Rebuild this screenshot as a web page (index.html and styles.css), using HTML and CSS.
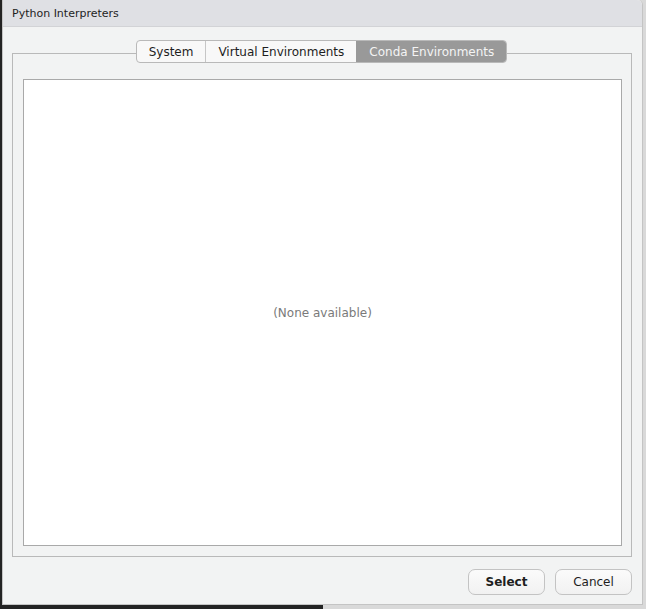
FILE: index.html
```html
<!DOCTYPE html>
<html lang="en">
<head>
    <meta charset="UTF-8">
    <title>Python Interpreters</title>
    <link rel="stylesheet" href="styles.css">
</head>
<body>
    <div class="dialog">
        <div class="titlebar">Python Interpreters</div>
        <div class="dialog-body">
            <div class="panel">
                <div class="tabs">
                    <button class="tab">System</button>
                    <button class="tab">Virtual Environments</button>
                    <button class="tab active">Conda Environments</button>
                </div>
                <div class="env-list">
                    <span class="empty">(None available)</span>
                </div>
            </div>
            <div class="actions">
                <button class="btn btn-primary">Select</button>
                <button class="btn">Cancel</button>
            </div>
        </div>
    </div>
</body>
</html>
```

FILE: styles.css
```css
:root {
    --dialog-bg: #f2f3f3;
    --title-bg: #dfe0e4;
    --border: #a9a9a9;
    --text: #1e1e1e;
    --muted: #7a7a7a;
}

html, body {
    margin: 0;
    padding: 0;
    height: 100%;
}

body {
    font-family: "DejaVu Sans", sans-serif;
    color: var(--text);
    /* desktop behind the dialog */
    background: linear-gradient(to right, #232323 0 50%, #d9d9d9 50%);
    overflow: hidden;
}

.dialog {
    margin-left: 2px;
    width: 641px;
    height: 605px;
    background-color: var(--dialog-bg);
    border: 1px solid #c4c4c4;
    border-top: none;
    border-radius: 0 5px 0 0;
    display: flex;
    flex-direction: column;
    box-sizing: border-box;
}

.titlebar {
    height: 27px;
    line-height: 28px;
    padding-left: 9px;
    font-size: 11px;
    background-color: var(--title-bg);
    border-radius: 0 5px 0 0;
    border-bottom: 1px solid #d2d3d6;
    box-sizing: border-box;
}

.dialog-body {
    flex: 1;
    display: flex;
    flex-direction: column;
    padding: 26px 10px 9px 9px;
}

.panel {
    flex: 1;
    border: 1px solid #b9b9b9;
    padding: 0 9px 10px 10px;
    display: flex;
    flex-direction: column;
}

.tabs {
    display: flex;
    align-self: center;
    margin-top: -14px;
    margin-left: -2px;
    margin-bottom: 16px;
    border: 1px solid #b9b9b9;
    border-radius: 4px;
    overflow: hidden;
    background-color: #f8f8f8;
}

.tab {
    font-family: inherit;
    font-size: 12px;
    color: var(--text);
    background: none;
    border: none;
    border-left: 1px solid #c6c6c6;
    height: 21px;
    padding: 0 12px;
    cursor: pointer;
}

.tab:first-child {
    border-left: none;
}

.tab.active {
    background-color: #999999;
    color: #f4f4f4;
    border-left-color: #999999;
}

.env-list {
    flex: 1;
    background-color: #ffffff;
    border: 1px solid var(--border);
    display: flex;
    align-items: center;
    justify-content: center;
}

.empty {
    font-size: 12px;
    color: var(--muted);
}

.actions {
    display: flex;
    justify-content: flex-end;
    gap: 10px;
    margin-top: 12px;
}

.btn {
    font-family: inherit;
    font-size: 12px;
    color: var(--text);
    width: 77px;
    height: 26px;
    border: 1px solid #c3c3c3;
    border-radius: 7px;
    background: linear-gradient(#fbfbfb, #f1f1f1);
    cursor: pointer;
}

.btn-primary {
    font-weight: bold;
}
```
